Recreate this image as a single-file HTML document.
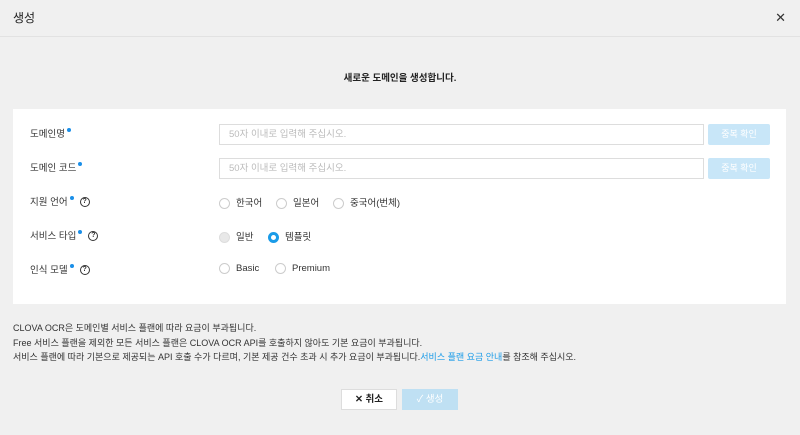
<!DOCTYPE html>
<html><head><meta charset="utf-8"><style>
*{box-sizing:border-box;margin:0;padding:0}
body{width:800px;height:435px;background:#f0f0f0;font-family:"Liberation Sans","Noto Sans CJK KR",sans-serif;color:#333;position:relative;overflow:hidden;font-size:10px}
.abs{position:absolute}
.hdr{left:0;top:0;width:800px;height:37px;border-bottom:1px solid #e2e2e2}
.title{left:13px;top:9px;font-size:12px;color:#222}
.close{right:14px;top:10px;font-size:13px;color:#333}
.sub{left:0;width:800px;top:70px;text-align:center;font-size:9.5px;font-weight:bold;color:#222}
.panel{left:13px;top:109px;width:773px;height:195px;background:#fff}
.lbl{left:30px;font-size:9.5px;color:#333}
.lbl i{display:inline-block;width:4px;height:4px;border-radius:50%;background:#1a8fe8;vertical-align:top;margin:2px 0 0 2px}
.q{display:inline-block;width:10px;height:10px;border:1.3px solid #333;border-radius:50%;font-size:7px;line-height:8px;text-align:center;font-weight:bold;margin-left:6px;vertical-align:middle}
.inp{left:219px;width:485px;height:21px;border:1px solid #ddd;font-size:9.5px;color:#bbb;padding:2px 9px;line-height:15px}
.btn{left:708px;width:62px;height:21px;background:#c8e6f8;color:#fff;font-size:9px;text-align:center;line-height:21px;border-radius:2px}
.r{display:inline-block;width:11px;height:11px;border:1px solid #ccc;border-radius:50%;vertical-align:middle;margin-right:6px;background:#fff}
.ro{font-size:9.5px;color:#333}
.info{left:13px;font-size:9px;color:#333}
</style></head><body>
<div class="abs hdr"></div>
<div class="abs title">생성</div>
<div class="abs close">✕</div>
<div class="abs sub">새로운 도메인을 생성합니다.</div>
<div class="abs panel"></div>
<div class="abs lbl" style="top:126px">도메인명<i></i></div>
<div class="abs lbl" style="top:160px">도메인 코드<i></i></div>
<div class="abs lbl" style="top:194px">지원 언어<i></i><span class="q">?</span></div>
<div class="abs lbl" style="top:228px">서비스 타입<i></i><span class="q">?</span></div>
<div class="abs lbl" style="top:262px">인식 모델<i></i><span class="q">?</span></div>
<div class="abs inp" style="top:124px">50자 이내로 입력해 주십시오.</div>
<div class="abs btn" style="top:124px">중복 확인</div>
<div class="abs inp" style="top:158px">50자 이내로 입력해 주십시오.</div>
<div class="abs btn" style="top:158px">중복 확인</div>
<div class="abs ro" style="left:219px;top:195px"><span class="r"></span>한국어</div>
<div class="abs ro" style="left:276px;top:195px"><span class="r"></span>일본어</div>
<div class="abs ro" style="left:333px;top:195px"><span class="r"></span>중국어(번체)</div>
<div class="abs ro" style="left:219px;top:229px"><span class="r" style="background:#e8e8e8;border-color:#ddd"></span>일반</div>
<div class="abs ro" style="left:268px;top:229px"><span class="r" style="border:3.5px solid #1a9be8"></span>템플릿</div>
<div class="abs ro" style="left:219px;top:263px"><span class="r"></span>Basic</div>
<div class="abs ro" style="left:275px;top:263px"><span class="r"></span>Premium</div>
<div class="abs info" style="top:321px">CLOVA OCR은 도메인별 서비스 플랜에 따라 요금이 부과됩니다.</div>
<div class="abs info" style="top:336px">Free 서비스 플랜을 제외한 모든 서비스 플랜은 CLOVA OCR API를 호출하지 않아도 기본 요금이 부과됩니다.</div>
<div class="abs info" style="top:350px">서비스 플랜에 따라 기본으로 제공되는 API 호출 수가 다르며, 기본 제공 건수 초과 시 추가 요금이 부과됩니다.<span style="color:#1a9be8">서비스 플랜 요금 안내</span>를 참조해 주십시오.</div>
<div class="abs" style="left:341px;top:389px;width:56px;height:21px;background:#fff;border:1px solid #ddd;font-size:9.5px;font-weight:bold;text-align:center;line-height:19px;color:#222">✕ 취소</div>
<div class="abs" style="left:402px;top:389px;width:56px;height:21px;background:#bfe0f3;font-size:9.5px;text-align:center;line-height:21px;color:#fff">✓ 생성</div>
</body></html>
